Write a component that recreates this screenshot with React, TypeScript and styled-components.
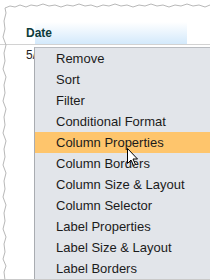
import React, { ReactElement } from 'react';
import styled, { createGlobalStyle } from 'styled-components';

interface ItemProps {
  active?: boolean;
}

const GlobalStyle = createGlobalStyle`
  html, body {
    margin: 0;
    padding: 0;
    background: #fff;
  }
  body {
    width: 210px;
    height: 280px;
    overflow: hidden;
  }
`;

const Sheet = styled.div`
  position: relative;
  width: 210px;
  height: 280px;
  overflow: hidden;
  background-color: #fff;
  font-family: 'Liberation Sans', Arial, sans-serif;
  padding-top: 22px;
  box-sizing: border-box;
  border-bottom: 1px solid #c9c9c9;
`;

const HeaderRow = styled.div`
  display: flex;
  align-items: center;
  height: 22px;
  padding-left: 26px;
  border-bottom: 1px solid #d2d2d2;
  background: linear-gradient(to bottom, #ffffff 0%, #d3e9fb 100%) no-repeat;
  background-size: 152px 100%;
  background-position: 35px 0;
`;

const HeaderLabel = styled.span`
  font-size: 12px;
  font-weight: bold;
  color: #0d3c3c;
`;

const DataRow = styled.div`
  display: flex;
  align-items: center;
  height: 16px;
  padding: 2px 0 0 26px;
  font-size: 12px;
  color: #222;
`;

const TornEdge = styled.svg`
  position: absolute;
  left: 0;
  top: 0;
  pointer-events: none;
`;

const Menu = styled.ul`
  position: absolute;
  left: 34px;
  top: 47px;
  width: 176px;
  margin: 0;
  padding: 0;
  list-style: none;
  background-color: #e2e5ea;
  border-top: 1px solid #b9bcc1;
  border-left: 1px solid #a9acb1;
`;

const MenuItem = styled.li<ItemProps>`
  height: 21px;
  line-height: 21px;
  padding-left: 21px;
  margin-right: 1px;
  font-size: 13px;
  color: #1b1b1b;
  white-space: nowrap;
  background-color: ${({ active }) => (active ? '#fec56c' : 'transparent')};
`;

const Cursor = styled.svg`
  position: absolute;
  left: 127px;
  top: 148px;
`;

const items = [
  'Remove',
  'Sort',
  'Filter',
  'Conditional Format',
  'Column Properties',
  'Column Borders',
  'Column Size & Layout',
  'Column Selector',
  'Label Properties',
  'Label Size & Layout',
  'Label Borders',
];

const App = (): ReactElement => (
  <>
    <GlobalStyle />
    <Sheet>
      <TornEdge width="210" height="280" viewBox="0 0 210 280">
        <path
          d="M5 280 L4 272 L6 266 L3 259 L5 252 L4 244 L6 237 L3 229 L5 221 L4 213 L6 205 L3 197 L5 189 L4 181 L6 173 L3 165 L5 157 L4 149 L6 141 L3 133 L5 125 L4 117 L6 109 L3 101 L5 93 L4 85 L6 77 L3 69 L5 61 L4 53 L6 45 L3 37 L5 29 L4 21 L6 13 L5 8 L10 6 L15 7 L20 5 L26 7 L31 5 L37 6 L43 4 L49 6 L55 5 L61 7 L67 5 L73 6 L79 4 L85 6 L91 5 L97 7 L103 5 L109 6 L115 4 L121 6 L127 5 L133 7 L139 5 L145 6 L151 4 L157 6 L163 5 L169 7 L175 5 L181 6 L187 4 L193 6 L199 5 L205 7 L210 5"
          fill="none"
          stroke="#b8b8b8"
          strokeWidth="1"
        />
      </TornEdge>
      <HeaderRow>
        <HeaderLabel>Date</HeaderLabel>
      </HeaderRow>
      <DataRow>5/</DataRow>
      <Menu>
        {items.map((label) => (
          <MenuItem key={label} active={label === 'Column Properties'}>
            {label}
          </MenuItem>
        ))}
      </Menu>
      <Cursor width="12" height="19" viewBox="0 0 12 19">
        <path
          d="M0.5 0.5 L0.5 15.5 L4 12 L6.5 17.5 L8.5 16.5 L6 11 L10.5 11 Z"
          fill="#fff"
          stroke="#000"
          strokeWidth="1"
          strokeLinejoin="miter"
        />
      </Cursor>
    </Sheet>
  </>
);

export default App;
